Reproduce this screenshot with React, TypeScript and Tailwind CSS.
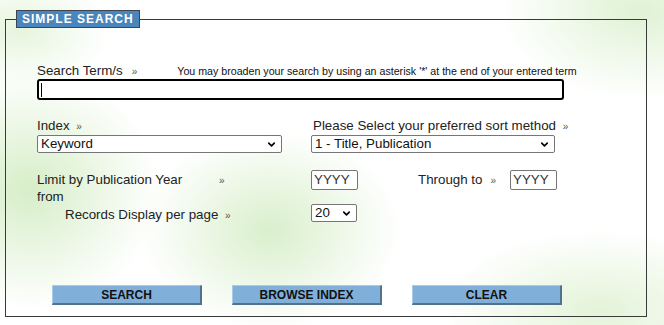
import { ChevronDown } from "lucide-react";

function Raquo({ className = "" }: { className?: string }) {
  return <span className={`text-[10px] text-[#555] ${className}`}>&raquo;</span>;
}

function FakeSelect({ value, width }: { value: string; width: string }) {
  return (
    <div className={`relative h-[18px] ${width} border border-[#767676] bg-white rounded-[2px]`}>
      <div className="pl-[3px] text-[13.33px] leading-[16px] text-[#111]">{value}</div>
      <ChevronDown className="absolute right-[4px] top-[3px] w-[11px] h-[11px] text-black" strokeWidth={3.5} />
    </div>
  );
}

function YearBox() {
  return (
    <div className="h-[20px] w-[47px] border border-[#767676] bg-white rounded-[2px] pl-[2px] text-[13.33px] leading-[18px] text-[#333]">
      YYYY
    </div>
  );
}

function BlueButton({ label }: { label: string }) {
  return (
    <button className="h-[20px] w-[150px] bg-[#80b0da] border-t border-l border-t-[#a9cbe8] border-l-[#a9cbe8] border-b-2 border-r-2 border-b-[#52718d] border-r-[#52718d] text-[12px] font-bold text-[#111] leading-[16px]">
      {label}
    </button>
  );
}

export default function App() {
  return (
    <div
      className="w-[664px] h-[325px] overflow-hidden pt-[10px] pl-[5px] text-[#222] bg-[radial-gradient(ellipse_140px_90px_at_640px_10px,#dff2d4,transparent),radial-gradient(ellipse_130px_120px_at_30px_190px,#d6eec8,transparent),radial-gradient(ellipse_130px_100px_at_270px_230px,#d9efcc,transparent),radial-gradient(ellipse_160px_80px_at_600px_310px,#e3f3d8,transparent),radial-gradient(ellipse_90px_60px_at_20px_30px,#e6f5dd,transparent)] bg-white"
      style={{ fontFamily: '"Liberation Sans", Arial, sans-serif' }}
    >
      <fieldset className="w-[642px] h-[307px] border border-[#3a3a3a] pl-[10px] pr-[10px]">
        <legend className="h-[18px] px-[5px] bg-[#4a86bc] border border-[#3b4650] text-white text-[12px] font-bold tracking-[1px] leading-[16px]">
          SIMPLE SEARCH
        </legend>

        <div className="pl-[21px] pt-[33px]">
          {/* Search term */}
          <div className="flex items-baseline h-[17px]">
            <span className="text-[13.33px]">Search Term/s</span>
            <Raquo className="ml-[9px]" />
            <span className="ml-[40px] text-[10.67px] text-[#111]">
              You may broaden your search by using an asterisk '*' at the end of your entered term
            </span>
          </div>
          <div className="relative mt-[1px] h-[21px] w-[527px] border-2 border-black rounded-[3px] bg-white">
            <span className="absolute left-[2px] top-[2px] h-[14px] w-[1px] bg-black" />
          </div>

          {/* Index / sort */}
          <div className="grid grid-cols-[274px_1fr] mt-[17px]">
            <div>
              <div className="h-[18px] text-[13.33px] leading-[17px]">
                Index <Raquo className="ml-[3px]" />
              </div>
              <FakeSelect value="Keyword" width="w-[245px]" />
            </div>
            <div>
              <div className="h-[18px] pl-[2px] text-[13.33px] leading-[17px]">
                Please Select your preferred sort method <Raquo className="ml-[3px]" />
              </div>
              <FakeSelect value="1 - Title, Publication" width="w-[244px]" />
            </div>
          </div>

          {/* Year limit */}
          <div className="grid grid-cols-[274px_1fr] mt-[16px]">
            <div className="text-[13.33px] leading-[16px] mt-[3px]">
              <span className="inline-block w-[182px]">Limit by Publication Year</span>
              <Raquo />
              <br />
              from
            </div>
            <div className="flex items-center h-[20px] mt-[1px]">
              <YearBox />
              <span className="ml-[60px] text-[13.33px]">Through to</span>
              <Raquo className="ml-[8px]" />
              <div className="ml-[14px]">
                <YearBox />
              </div>
            </div>
          </div>

          {/* Records per page */}
          <div className="grid grid-cols-[274px_1fr] mt-[-1px]">
            <div className="pl-[28px] text-[13.33px] leading-[17px] pt-[2px]">
              Records Display per page <Raquo className="ml-[3px]" />
            </div>
            <FakeSelect value="20" width="w-[46px]" />
          </div>

          {/* Buttons */}
          <div className="flex gap-[30px] mt-[61px] pl-[15px]">
            <BlueButton label="SEARCH" />
            <BlueButton label="BROWSE INDEX" />
            <BlueButton label="CLEAR" />
          </div>
        </div>
      </fieldset>
    </div>
  );
}
